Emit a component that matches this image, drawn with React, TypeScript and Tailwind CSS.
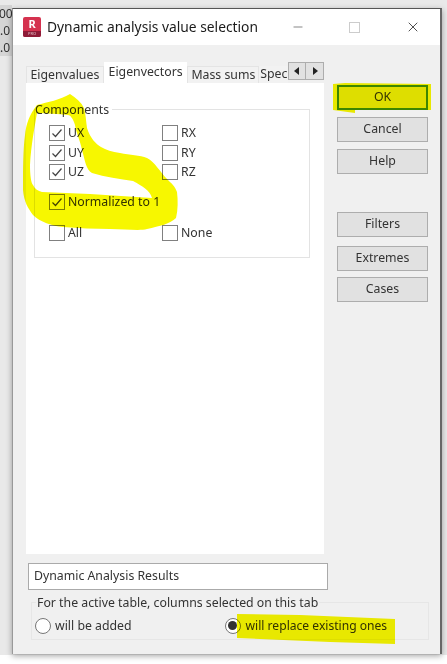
import { X, Minus } from "lucide-react";

const FONT = "font-['Noto_Sans','Open_Sans',sans-serif]";

function Check({ label, checked, className }: { label: string; checked?: boolean; className?: string }) {
  return (
    <div className={`flex items-center h-[16px] ${className ?? ""}`}>
      <div className="w-[16px] h-[16px] border border-[#808080] bg-white/60 flex items-center justify-center shrink-0">
        {checked && (
          <svg width="14" height="14" viewBox="0 0 14 14" fill="none">
            <path d="M2.5 7.5 L5.5 10.5 L11.5 3.5" stroke="#444" strokeWidth="1.2" />
          </svg>
        )}
      </div>
      <span className="ml-[3px] text-[12.3px] text-[#333] leading-none">{label}</span>
    </div>
  );
}

function Btn({ label, className }: { label: string; className?: string }) {
  return (
    <div className={`w-[91px] h-[25px] bg-[#e1e1e1] border border-[#adadad] flex items-center justify-center text-[12.3px] text-[#333] ${className ?? ""}`}>
      {label}
    </div>
  );
}

function Radio({ checked }: { checked?: boolean }) {
  return (
    <div className="w-[16px] h-[16px] rounded-full border border-[#777] bg-white flex items-center justify-center shrink-0">
      {checked && <div className="w-[9px] h-[9px] rounded-full bg-[#333]" />}
    </div>
  );
}

export default function App() {
  return (
    <div className={`relative w-[447px] h-[664px] overflow-hidden bg-white ${FONT}`}>
      <div className="h-[655px] bg-[#e9e9e9] flex items-start blur-[0.35px]">
        {/* table behind the dialog */}
        <div className="w-[12px] mt-[5px] bg-[#d5d5d5] text-[12px] text-[#333] leading-[17px] overflow-hidden">
          <div className="-ml-[1px]">00</div>
          <div>.0</div>
          <div>.0</div>
        </div>

        <div className="w-[430px] h-[646px] mt-[8px] bg-[#f0f0f0] border-t border-[#555] border-r-2 border-r-[#666] border-l border-l-[#999] shadow-[0_2px_6px_rgba(0,0,0,0.35)] flex flex-col">
          {/* title bar */}
          <div className="h-[36px] bg-white flex items-center shrink-0">
            <div className="ml-[10px] w-[18px] h-[20px] rounded-[2px] bg-[#d5324f] flex flex-col items-center overflow-hidden">
              <span className="h-[14px] text-[11px] font-bold text-white leading-[14px]">R</span>
              <span className="w-full h-[6px] bg-[#8e1c38] text-[4px] text-center text-white/70 leading-[6px]">PRO</span>
            </div>
            <span className="ml-[6px] text-[13.8px] text-[#1b1b1b] whitespace-nowrap">Dynamic analysis value selection</span>
            <Minus className="ml-[33px] w-[14px] h-[14px] text-[#555]" strokeWidth={1.2} />
            <div className="ml-[44px] w-[11px] h-[11px] border border-[#ccc]" />
            <X className="ml-[45px] w-[16px] h-[16px] text-[#333]" strokeWidth={1.3} />
          </div>

          {/* body */}
          <div className="flex-1 flex flex-col pl-[13px]">
            <div className="flex h-[492px] mt-[17px]">
              <div className="w-[298px] flex flex-col">
                <div className="flex items-end h-[21px] text-[12.3px] text-[#333] leading-none">
                  <div className="w-[78px] h-[17px] bg-[#f2f2f2] border border-[#e4e4e4] border-b-0 flex items-center justify-center">Eigenvalues</div>
                  <div className="w-[84px] h-[21px] bg-white flex items-center justify-center">Eigenvectors</div>
                  <div className="w-[72px] h-[17px] bg-[#f2f2f2] border border-[#e4e4e4] border-b-0 flex items-center justify-center">Mass sums</div>
                  <div className="w-[29px] h-[17px] bg-[#f2f2f2] flex items-center pl-[1px]">Spec</div>
                  <div className="self-start w-[18px] h-[18px] bg-[#e1e1e1] border border-[#adadad] flex items-center justify-center">
                    <svg width="6" height="8" viewBox="0 0 6 8"><path d="M5 0 V8 L0 4 Z" fill="#222" /></svg>
                  </div>
                  <div className="self-start w-[18px] h-[18px] bg-[#e1e1e1] border border-[#adadad] border-l-0 flex items-center justify-center">
                    <svg width="6" height="8" viewBox="0 0 6 8"><path d="M1 0 V8 L6 4 Z" fill="#222" /></svg>
                  </div>
                </div>
                <div className="flex-1 bg-white pt-[26px] px-[8px]">
                  <div className="relative h-[149px] w-[276px] border border-[#e3e3e3] pl-[14px] pt-[15px]">
                    <span className="absolute left-[0px] -top-[8px] bg-white pr-[3px] text-[12.3px] text-[#333] leading-[16px]">Components</span>
                    <div className="grid grid-cols-[113px_1fr] gap-y-[4px]">
                      <Check label="UX" checked />
                      <Check label="RX" />
                      <Check label="UY" checked />
                      <Check label="RY" />
                      <Check label="UZ" checked className="-mt-px" />
                      <Check label="RZ" className="-mt-px" />
                      <Check label="Normalized to 1" checked className="col-span-2 mt-[10px]" />
                      <Check label="All" className="mt-[11px]" />
                      <Check label="None" className="mt-[11px]" />
                    </div>
                  </div>
                </div>
              </div>

              <div className="flex flex-col ml-[13px] mt-[23px]">
                <Btn label="OK" className="!bg-[#e6e600] !border-2 !border-[#3f8a2a]" />
                <Btn label="Cancel" className="mt-[7px]" />
                <Btn label="Help" className="mt-[7px]" />
                <Btn label="Filters" className="mt-[38px]" />
                <Btn label="Extremes" className="mt-[9px]" />
                <Btn label="Cases" className="mt-[6px]" />
              </div>
            </div>

            <div className="w-[300px] h-[27px] ml-[2px] mt-[9px] bg-white border border-[#aaa] px-[5px] flex items-center text-[12.3px] text-[#333]">
              Dynamic Analysis Results
            </div>

            <div className="relative w-[398px] h-[38px] ml-[5px] mt-[12px] border border-[#e6e6e6] flex items-center">
              <span className="absolute left-[4px] -top-[8px] bg-[#f0f0f0] px-[1px] text-[12.3px] text-[#333] leading-[16px]">For the active table, columns selected on this tab</span>
              <div className="flex items-center mt-[10px] ml-[3px]">
                <Radio />
                <span className="ml-[4px] text-[12.3px] text-[#333]">will be added</span>
              </div>
              <div className="flex items-center mt-[10px] ml-[93px]">
                <Radio checked />
                <span className="ml-[5px] text-[12.1px] text-[#333]">will replace existing ones</span>
              </div>
            </div>
          </div>
        </div>
      </div>

      {/* marker highlights drawn over the dialog */}
      <svg className="absolute inset-0 pointer-events-none mix-blend-multiply" width="447" height="664" viewBox="0 0 447 664">
        <path
          fill="#f7f700"
          fillRule="evenodd"
          d="M70 94 C76 98 81 102 84 108 C86 115 86 122 87 128 C90 138 96 144 101 147 C106 150 112 152 120 153 C130 155 140 155 147 158 C155 162 160 172 167 179 C171 183 175 186 177 192 C178 200 178 210 176 218 C170 224 160 226 147 229 C140 231 125 229 110 229 C95 229 78 228 63 227 C52 226 40 222 33 215 C28 208 24 202 23 190 C23 170 23 150 25 135 C26 125 29 115 37 105 C48 102 60 100 70 94 Z M37 113 C35 125 31 145 30 165 C30 175 31 183 33 185 C35 189 38 191 42 192 L90 194 L152 198 C150 190 142 186 133 181 C120 179 105 177 92 173 C86 170 85 160 82 150 C80 140 76 132 75 125 C73 118 70 115 68 115 C58 114 47 113 37 113 Z"
        />
        <path fill="#f7f700" d="M237 614 L300 615 L395 619 L395 644 L330 642 L237 638 Z" />
        <path fill="#f7f700" d="M333 84 L345 83 L431 84 L431 110 L355 110 L355 113 L333 110 Z" />
      </svg>
    </div>
  );
}
